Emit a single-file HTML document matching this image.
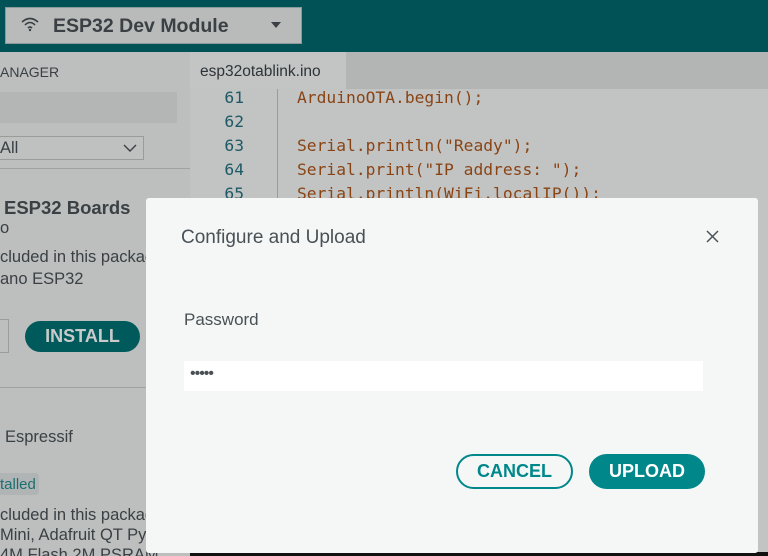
<!DOCTYPE html>
<html><head><style>
*{margin:0;padding:0;box-sizing:border-box}
html,body{width:768px;height:556px;overflow:hidden}
body{background:#b9bbbb;font-family:"Liberation Sans",sans-serif;position:relative}
.a{position:absolute}
.mono{font-family:"DejaVu Sans Mono","Liberation Mono",monospace;font-size:16.3px}
.ln{color:#1e5a66;left:200px;width:44px;text-align:right}
.cd{color:#8a4414;left:297px}
.side{color:#3a4043;font-size:16.5px;white-space:nowrap}
</style></head><body>
<div class="a" style="left:0;top:0;width:768px;height:52px;background:#005256"></div>
<div class="a" style="left:5px;top:7px;width:297px;height:37px;background:#b9bbbb;border:1px solid #8a9a9a"></div>
<svg class="a" style="left:20px;top:16px" width="20" height="16" viewBox="0 0 20 16"><g fill="none" stroke="#3a4043" stroke-width="1.6"><path d="M2 6 Q10 -1 18 6"/><path d="M5 9 Q10 4 15 9"/><path d="M8 12 Q10 10 12 12"/></g><circle cx="10" cy="14" r="1.2" fill="#3a4043"/></svg>
<div class="a" style="left:53px;top:15px;font-size:19.5px;font-weight:bold;color:#3a4043">ESP32 Dev Module</div>
<div class="a" style="left:271px;top:22px;border:5px solid transparent;border-top:6px solid #3a4043"></div>
<div class="a" style="left:0;top:52px;width:190px;height:504px;background:#bdbfbf"></div>
<div class="a side" style="left:0;top:64px;font-size:14px">ANAGER</div>
<div class="a" style="left:0;top:92px;width:177px;height:31px;background:#b4b6b6"></div>
<div class="a" style="left:-2px;top:136px;width:146px;height:24px;border:1px solid #9a9c9c;background:#bfc1c1"></div>
<div class="a side" style="left:0;top:139px">All</div>
<svg class="a" style="left:123px;top:143px" width="14" height="10"><path d="M1 2 L7 8 L13 2" fill="none" stroke="#3a4043" stroke-width="1.4"/></svg>
<div class="a" style="left:0;top:168px;width:190px;height:1px;background:#a0a2a2"></div>
<div class="a side" style="left:4px;top:197px;font-size:18.5px;font-weight:bold">ESP32 Boards</div>
<div class="a side" style="left:0;top:219px">o</div>
<div class="a side" style="left:0;top:248px">cluded in this packag</div>
<div class="a side" style="left:0;top:270px">ano ESP32</div>
<div class="a" style="left:-10px;top:319px;width:19px;height:34px;border:1px solid #9a9c9c"></div>
<div class="a" style="left:25px;top:321px;width:115px;height:31px;border-radius:16px;background:#00595b;color:#c9cbcb;font-weight:bold;font-size:18px;text-align:center;line-height:31px">INSTALL</div>
<div class="a" style="left:0;top:387px;width:190px;height:1px;background:#a0a2a2"></div>
<div class="a side" style="left:5px;top:428px">Espressif</div>
<div class="a" style="left:-4px;top:473px;width:43px;height:22px;border-radius:4px;background:#b0b4b4"></div>
<div class="a side" style="left:0;top:476px;color:#1b6f70;font-size:15px">talled</div>
<div class="a side" style="left:0;top:506px">cluded in this packag</div>
<div class="a side" style="left:0;top:526px">Mini, Adafruit QT Py</div>
<div class="a side" style="left:0;top:546px">4M Flash 2M PSRAM</div>
<div class="a" style="left:190px;top:52px;width:156px;height:37px;background:#c3c5c5"></div>
<div class="a" style="left:346px;top:52px;width:422px;height:37px;background:#b3b5b5"></div>
<div class="a" style="left:200px;top:63px;font-size:15.5px;color:#2d3336">esp32otablink.ino</div>
<div class="a" style="left:190px;top:89px;width:578px;height:467px;background:#c2c4c4"></div>
<div class="a" style="left:277px;top:89px;width:1px;height:120px;background:#9a9c9c"></div>
<div class="a mono ln" style="top:88px">61</div><div class="a mono cd" style="top:88px">ArduinoOTA.begin();</div>
<div class="a mono ln" style="top:112px">62</div>
<div class="a mono ln" style="top:136px">63</div><div class="a mono cd" style="top:136px">Serial.println("Ready");</div>
<div class="a mono ln" style="top:160px">64</div><div class="a mono cd" style="top:160px">Serial.print("IP address: ");</div>
<div class="a mono ln" style="top:184px">65</div><div class="a mono cd" style="top:184px">Serial.println(WiFi.localIP());</div>
<div class="a" style="left:190px;top:552px;width:578px;height:4px;background:#111"></div>
<div class="a" style="left:146px;top:198px;width:612px;height:355px;background:#f5f7f7;border-radius:3px"></div>
<div class="a" style="left:181px;top:227px;font-size:19px;color:#4a5155">Configure and Upload</div>
<svg class="a" style="left:706px;top:230px" width="13" height="13"><path d="M1 1 L12 12 M12 1 L1 12" stroke="#4a5155" stroke-width="1.5"/></svg>
<div class="a" style="left:184px;top:310px;font-size:17px;color:#4a5155">Password</div>
<div class="a" style="left:184px;top:361px;width:519px;height:30px;background:#fff"></div>
<div class="a" style="left:190px;top:365px;font-size:16px;color:#4a5155;letter-spacing:-1px">•••••</div>
<div class="a" style="left:456px;top:454px;width:117px;height:35px;border:2.5px solid #00878a;border-radius:18px;color:#00878a;font-weight:bold;font-size:18px;text-align:center;line-height:30px">CANCEL</div>
<div class="a" style="left:589px;top:454px;width:116px;height:35px;background:#00878a;border-radius:18px;color:#fff;font-weight:bold;font-size:18px;text-align:center;line-height:35px">UPLOAD</div>
</body></html>
